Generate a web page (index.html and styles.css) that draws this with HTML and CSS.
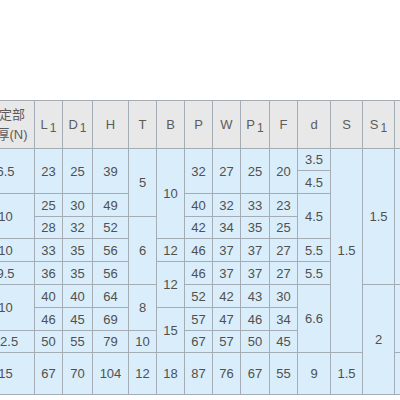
FILE: index.html
```html
<!DOCTYPE html>
<html lang="zh">
<head>
<meta charset="utf-8">
<title>规格表</title>
<link rel="stylesheet" href="styles.css">
</head>
<body>
<div class="frame">
  <div class="spec">
    <div class="hd">固定部<br>板厚(N)</div>
    <div class="hd">L<span class="sub">1</span></div>
    <div class="hd">D<span class="sub">1</span></div>
    <div class="hd">H</div>
    <div class="hd">T</div>
    <div class="hd">B</div>
    <div class="hd">P</div>
    <div class="hd">W</div>
    <div class="hd">P<span class="sub">1</span></div>
    <div class="hd">F</div>
    <div class="hd">d</div>
    <div class="hd">S</div>
    <div class="hd">S<span class="sub">1</span></div>
    <div class="hd"></div>

    <div class="c r2">6.5</div>
    <div class="c r2">23</div>
    <div class="c r2">25</div>
    <div class="c r2">39</div>
    <div class="c r3">5</div>
    <div class="c r4">10</div>
    <div class="c r2">32</div>
    <div class="c r2">27</div>
    <div class="c r2">25</div>
    <div class="c r2">20</div>
    <div class="c">3.5</div>
    <div class="c r9">1.5</div>
    <div class="c r6">1.5</div>
    <div class="c r6"></div>

    <div class="c">4.5</div>

    <div class="c r2">10</div>
    <div class="c">25</div>
    <div class="c">30</div>
    <div class="c">49</div>
    <div class="c">40</div>
    <div class="c">32</div>
    <div class="c">33</div>
    <div class="c">23</div>
    <div class="c r2">4.5</div>

    <div class="c">28</div>
    <div class="c">32</div>
    <div class="c">52</div>
    <div class="c r3">6</div>
    <div class="c">42</div>
    <div class="c">34</div>
    <div class="c">35</div>
    <div class="c">25</div>

    <div class="c">10</div>
    <div class="c">33</div>
    <div class="c">35</div>
    <div class="c">56</div>
    <div class="c">12</div>
    <div class="c">46</div>
    <div class="c">37</div>
    <div class="c">37</div>
    <div class="c">27</div>
    <div class="c">5.5</div>

    <div class="c">9.5</div>
    <div class="c">36</div>
    <div class="c">35</div>
    <div class="c">56</div>
    <div class="c r2">12</div>
    <div class="c">46</div>
    <div class="c">37</div>
    <div class="c">37</div>
    <div class="c">27</div>
    <div class="c">5.5</div>

    <div class="c r2">10</div>
    <div class="c">40</div>
    <div class="c">40</div>
    <div class="c">64</div>
    <div class="c r2">8</div>
    <div class="c">52</div>
    <div class="c">42</div>
    <div class="c">43</div>
    <div class="c">30</div>
    <div class="c r3">6.6</div>
    <div class="c r4">2</div>
    <div class="c r3"></div>

    <div class="c">46</div>
    <div class="c">45</div>
    <div class="c">69</div>
    <div class="c r2">15</div>
    <div class="c">57</div>
    <div class="c">47</div>
    <div class="c">46</div>
    <div class="c">34</div>

    <div class="c">12.5</div>
    <div class="c">50</div>
    <div class="c">55</div>
    <div class="c">79</div>
    <div class="c">10</div>
    <div class="c">67</div>
    <div class="c">57</div>
    <div class="c">50</div>
    <div class="c">45</div>

    <div class="c">15</div>
    <div class="c">67</div>
    <div class="c">70</div>
    <div class="c">104</div>
    <div class="c">12</div>
    <div class="c">18</div>
    <div class="c">87</div>
    <div class="c">76</div>
    <div class="c">67</div>
    <div class="c">55</div>
    <div class="c">9</div>
    <div class="c">1.5</div>
    <div class="c"></div>
  </div>
</div>
</body>
</html>
```

FILE: styles.css
```css
html, body {
  margin: 0;
  padding: 0;
  background: #ffffff;
  overflow: hidden;
}

.frame {
  width: 400px;
  height: 400px;
  overflow: hidden;
  padding-top: 100px;
  box-sizing: border-box;
}

.spec {
  display: grid;
  grid-template-columns: 57px 27px 29px 35px 27px 27px 27px 27px 28px 27px 32px 31px 31px 46px;
  grid-template-rows: 47px 21px 22px 22px 21px 22px 22px 22px 22px 21px 41px;
  gap: 1px;
  padding: 1px;
  margin-left: -24px;
  width: max-content;
  background: #a4adb6;
  font-family: "Liberation Sans", Arial, "Noto Sans CJK SC", sans-serif;
  font-size: 13px;
  color: #505050;
}

.hd,
.c {
  display: flex;
  align-items: center;
  justify-content: center;
  text-align: center;
  white-space: nowrap;
}

.hd {
  background: #e8e8e8;
  color: #5c5c5c;
  line-height: 20px;
}

.c {
  background: #d9eefa;
}

.sub {
  font-size: 12px;
  position: relative;
  top: 3px;
  margin-left: 2px;
}

.r2 { grid-row: span 2; }
.r3 { grid-row: span 3; }
.r4 { grid-row: span 4; }
.r6 { grid-row: span 6; }
.r9 { grid-row: span 9; }
```
